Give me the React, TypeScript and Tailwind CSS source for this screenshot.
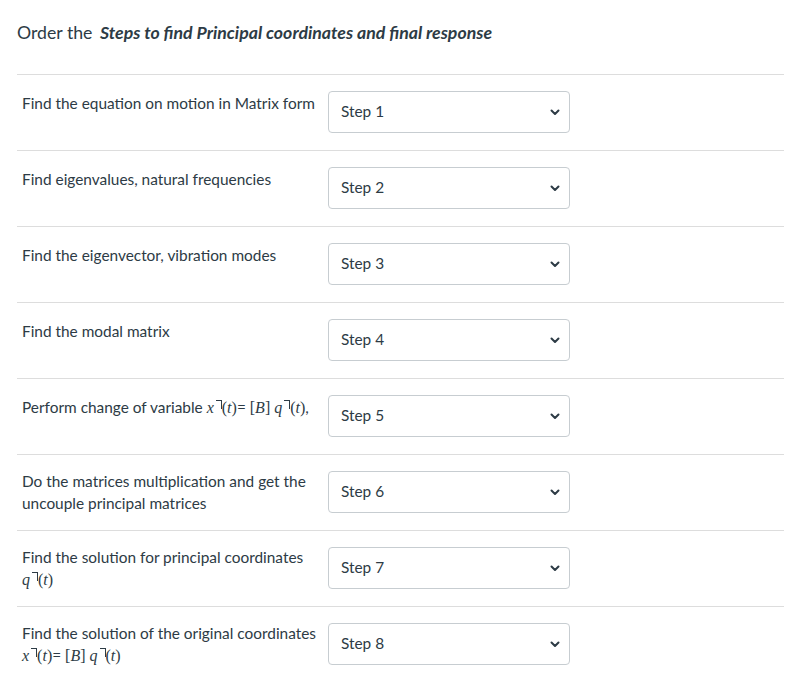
import { ReactNode } from 'react';

const SERIF = '"Liberation Serif", "DejaVu Serif", serif';

const Var = ({ c }: { c: string }) => (
  <span className="italic" style={{ fontFamily: SERIF }}>
    {c}
  </span>
);

// vector mark as rendered in the original: a bar with a short tick at its right end
const VecT = ({ v }: { v: string }) => (
  <span className="whitespace-nowrap text-[16px]" style={{ fontFamily: SERIF }}>
    <span className="italic">{v}</span>
    <span className="relative -top-[4px] ml-[2px] inline-block h-[9px] w-[6px] border-r border-t border-[#2d3b45]" />
    (<span className="italic">t</span>)
  </span>
);

const XB = () => (
  <>
    <VecT v="x" />={' '}
    <span className="text-[16px]" style={{ fontFamily: SERIF }}>
      [<Var c="B" />]
    </span>{' '}
    <VecT v="q" />
  </>
);

type Row = { label: ReactNode; two?: boolean };

const ROWS: Row[] = [
  { label: 'Find the equation on motion in Matrix form' },
  { label: 'Find eigenvalues, natural frequencies' },
  { label: 'Find the eigenvector, vibration modes' },
  { label: 'Find the modal matrix' },
  {
    label: (
      <>
        Perform change of variable <XB />,
      </>
    ),
  },
  {
    label: (
      <>
        Do the matrices multiplication and get the
        <br />
        uncouple principal matrices
      </>
    ),
    two: true,
  },
  {
    label: (
      <>
        Find the solution for principal coordinates <br />
        <VecT v="q" />
      </>
    ),
    two: true,
  },
  {
    label: (
      <>
        Find the solution of the original coordinates <br />
        <XB />
      </>
    ),
    two: true,
  },
];

export default function App() {
  return (
    <div
      className="min-h-screen bg-white pl-[17px] pr-[1px] text-[#2d3b45]"
      style={{ fontFamily: 'Lato, "Noto Sans", sans-serif' }}
    >
      <h1 className="pt-[21px] pb-[22px] text-[17.7px] leading-[24px] font-normal">
        Order the <span className="ml-[3px] font-bold italic">Steps to find Principal coordinates and final response</span>
      </h1>
      <div className="mt-[7px]">
        {ROWS.map((r, i) => (
          <div key={i} className="flex h-[76px] border-t border-[#dddddd]">
            <div
              className={`w-[311px] shrink-0 whitespace-nowrap pl-[5px] text-[15.4px] leading-[22px] ${r.two ? 'pt-[15px]' : 'pt-[17px]'}`}
            >
              {r.label}
            </div>
            <div className="pt-[16px]">
              <div className="flex h-[42px] w-[242px] items-center justify-between rounded-[4px] border border-[#c7cdd1] bg-white pl-[12px] pr-[9px] text-[15.4px]">
                <span>Step {i + 1}</span>
                <svg width="10" height="7" viewBox="0 0 10 7" fill="none">
                  <path d="M1.5 1.5 5 5 8.5 1.5" stroke="#2d3b45" strokeWidth="2" strokeLinecap="round" strokeLinejoin="round" />
                </svg>
              </div>
            </div>
          </div>
        ))}
      </div>
    </div>
  );
}
